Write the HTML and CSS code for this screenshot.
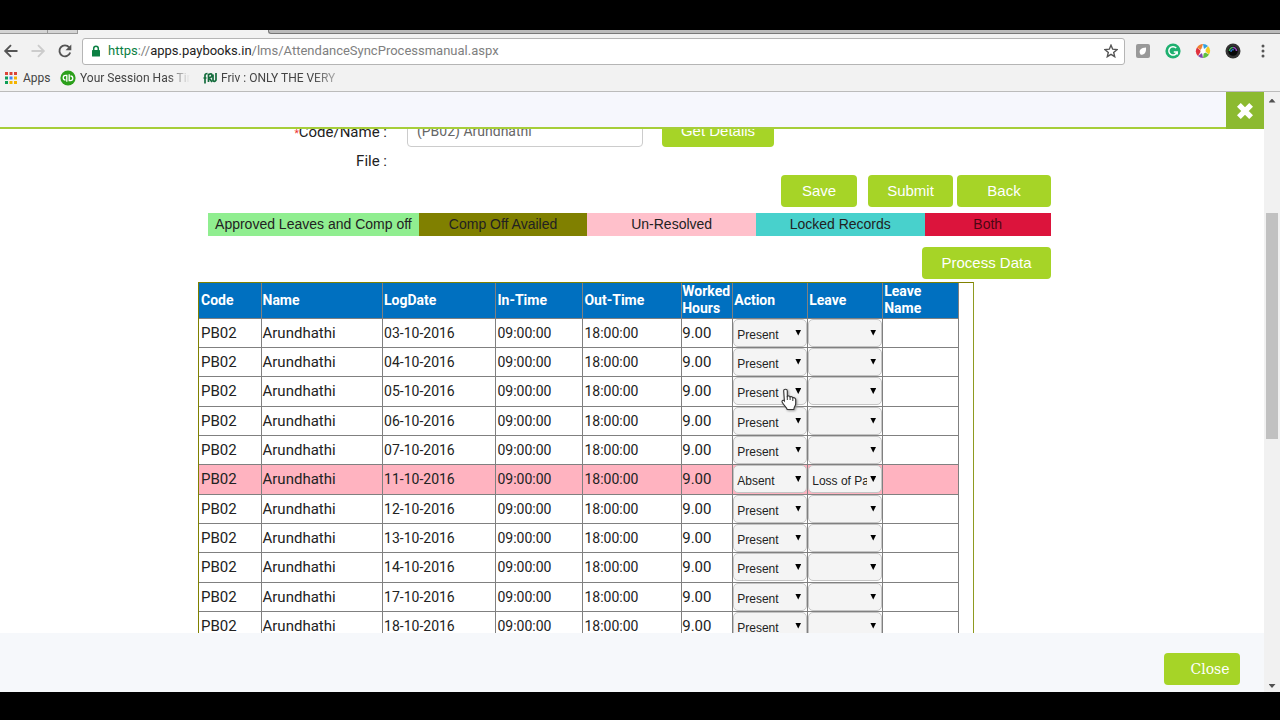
FILE: index.html
```html
<!DOCTYPE html>
<html lang="en">
<head>
<meta charset="utf-8">
<title>Attendance Sync Process</title>
<link rel="stylesheet" href="styles.css">
</head>
<body>
<div class="browser">
  <div class="tabs"><span class="tab tab-first"></span><span class="tab tab-second"></span><span class="tab tab-active"></span><span class="tab tab-rest"></span></div>
  <div class="toolbar">
    <button class="nav" aria-label="Back to previous page"><svg width="16" height="16" viewBox="0 0 16 16"><path d="M14.500 8H2.500M8 2.200 2.200 8 8 13.800" fill="none" stroke="#555" stroke-width="1.900"/></svg></button>
    <button class="nav" aria-label="Forward"><svg width="16" height="16" viewBox="0 0 16 16"><path d="M1.500 8h12M8 2.200 13.800 8 8 13.800" fill="none" stroke="#ccc" stroke-width="1.900"/></svg></button>
    <button class="nav" aria-label="Reload"><svg width="16" height="16" viewBox="0 0 16 16"><path d="M12.200 4.400A5.500 5.500 0 1 0 13.200 9.500" fill="none" stroke="#555" stroke-width="1.900"/><path d="M14.300 1.500v5.800H8.500z" fill="#555"/></svg></button>
    <div class="omnibox">
      <svg width="10" height="12" viewBox="0 0 10 12"><path d="M2.700 6V3.500a2.300 2.300 0 0 1 4.600 0V6" fill="none" stroke="#0b8043" stroke-width="1.500"/><rect x="1" y="5" width="8" height="6.500" rx=".6" fill="#0b8043"/></svg>
      <div class="url" role="textbox" aria-label="Address"><span class="url-scheme">https</span><span class="url-dim">://</span>apps.paybooks.in<span class="url-dim">/lms/AttendanceSyncProcessmanual.aspx</span></div>
      <svg width="14" height="14" viewBox="0 0 14 14"><path d="m7 1.200 1.700 4 4.300.4-3.300 2.800 1 4.300L7 10.400l-3.700 2.300 1-4.300L1 5.600l4.300-.4z" fill="none" stroke="#555" stroke-width="1.400"/></svg>
    </div>
    <div class="extensions">
      <svg width="16" height="16" viewBox="0 0 16 16"><rect x="1" y="1" width="14" height="14" rx="2" fill="#999"/><path d="M5.500 11.500c-2.500-4 .5-7 5.500-7 .5 4.500-1.500 8-5.500 7z" fill="#fff"/></svg>
      <svg width="16" height="16" viewBox="0 0 16 16"><circle cx="8" cy="8" r="7.600" fill="#1fb070"/><path d="M11.200 5.100A4.200 4.200 0 1 0 12.100 9H8.800M12.200 8.800v2.800" fill="none" stroke="#fff" stroke-width="1.500"/></svg>
      <svg width="16" height="16" viewBox="0 0 16 16"><path d="M8 1a7 7 0 0 0-6 3.500L6 7z" fill="#f08030"/><path d="M2 4.500A7 7 0 0 0 3 13l3-5z" fill="#e0303c"/><path d="M3 13a7 7 0 0 0 5 2l-1-5z" fill="#8048b0"/><path d="M8 15a7 7 0 0 0 6-3.500L9 9z" fill="#60c040"/><path d="M14 11.500A7 7 0 0 0 13 3l-3 5z" fill="#f0d020"/><path d="M13 3a7 7 0 0 0-5-2l1 5z" fill="#30a0e0"/><circle cx="8" cy="8" r="2.500" fill="#fff"/></svg>
      <svg width="16" height="16" viewBox="0 0 16 16"><circle cx="8" cy="8" r="7.500" fill="#333"/><circle cx="8" cy="8" r="4.800" fill="#080808"/><path d="M4.500 8A3.500 3.500 0 0 1 8 4.500" fill="none" stroke="#3cb464" stroke-width="1.600"/><path d="M8 4.500A3.500 3.500 0 0 1 11.500 8" fill="none" stroke="#9c4ac0" stroke-width="1.600"/><path d="M6 9a2 2 0 0 1 3-2" fill="none" stroke="#3078d0" stroke-width="1.300"/></svg>
      <svg width="4" height="16" viewBox="0 0 4 16"><g fill="#555"><circle cx="2" cy="3" r="1.500"/><circle cx="2" cy="8" r="1.500"/><circle cx="2" cy="13" r="1.500"/></g></svg>
    </div>
  </div>
  <nav class="bookmarks">
    <a href="#" class="bookmark apps"><svg width="14" height="14" viewBox="0 0 14 14"><path d="M1 1h3v3H1zM5.500 1h3v3h-3zM10 1h3v3h-3z" fill="#db4437"/><path d="M1 5.500h3v3H1z" fill="#0f9d58"/><path d="M5.500 5.500h3v3h-3z" fill="#4285f4"/><path d="M10 5.500h3v3h-3zM5.500 10h3v3h-3zM10 10h3v3h-3z" fill="#f4b400"/><path d="M1 10h3v3H1z" fill="#0f9d58"/></svg>Apps</a>
    <a href="#" class="bookmark session"><svg width="16" height="16" viewBox="0 0 16 16"><circle cx="8" cy="8" r="7.600" fill="#2ca01c"/><path d="M6.800 11.800V5.400H5.500a2.300 2.300 0 0 0 0 4.600M9.200 4.200v6.400h1.300a2.300 2.300 0 0 0 0-4.600" fill="none" stroke="#fff" stroke-width="1.300"/></svg><span>Your Session Has Time</span></a>
    <a href="#" class="bookmark friv"><svg width="14" height="14" viewBox="0 0 14 14"><path d="M2 12.500V4.500q0-2 2.500-2M.5 7h3M5.500 11V3.500q3.500-1.500 3.500.8Q9 6.500 6 6.800L9 11M10 3.500v6q1.500 2 3-.5V2" fill="none" stroke="#146c3c" stroke-width="1.700"/></svg><span>Friv : ONLY THE VERY</span></a>
  </nav>
</div>
<div class="viewport">
  <div class="dialog">
    <header class="dialog-head"><button class="dismiss" aria-label="Close dialog"><svg width="20" height="20" viewBox="0 0 18 18"><path d="m3.500 3.500 11 11m0-11-11 11" stroke="#fff" stroke-width="4.800"/></svg></button></header>
    <main class="dialog-body">
      <div class="form-row">
        <label class="label" for="employee"><span class="required">*</span>Code/Name :</label>
        <input class="employee" id="employee" type="text" value="(PB02) Arundhathi">
        <button class="btn btn-details">Get Details</button>
      </div>
      <div class="file-row"><span class="label">File :</span></div>
      <div class="actions"><button class="btn btn-save">Save</button><button class="btn btn-submit">Submit</button><button class="btn btn-back">Back</button></div>
      <div class="legend"><span class="key approved">Approved Leaves and Comp off</span><span class="key comp">Comp Off Availed</span><span class="key unresolved">Un-Resolved</span><span class="key locked">Locked Records</span><span class="key both">Both</span></div>
      <div class="process"><button class="btn btn-process">Process Data</button></div>
      <div class="records">
        <table>
          <colgroup><col class="c-code"><col class="c-name"><col class="c-date"><col class="c-in"><col class="c-out"><col class="c-hours"><col class="c-pick"><col class="c-pick"><col class="c-leave"></colgroup>
          <thead><tr><th>Code</th><th>Name</th><th>LogDate</th><th>In-Time</th><th>Out-Time</th><th class="hours">Worked Hours</th><th>Action</th><th>Leave</th><th>Leave Name</th></tr></thead>
          <tbody>
            <tr><td>PB02</td><td>Arundhathi</td><td class="stamp">03-10-2016</td><td class="stamp">09:00:00</td><td class="stamp">18:00:00</td><td class="hours">9.00</td><td class="choice"><span class="pick"><select aria-label="Action"><option>Present</option><option>Absent</option></select></span></td><td class="choice"><span class="pick"><select aria-label="Leave"><option></option></select></span></td><td></td></tr>
            <tr><td>PB02</td><td>Arundhathi</td><td class="stamp">04-10-2016</td><td class="stamp">09:00:00</td><td class="stamp">18:00:00</td><td class="hours">9.00</td><td class="choice"><span class="pick"><select aria-label="Action"><option>Present</option><option>Absent</option></select></span></td><td class="choice"><span class="pick"><select aria-label="Leave"><option></option></select></span></td><td></td></tr>
            <tr><td>PB02</td><td>Arundhathi</td><td class="stamp">05-10-2016</td><td class="stamp">09:00:00</td><td class="stamp">18:00:00</td><td class="hours">9.00</td><td class="choice"><span class="pick"><select aria-label="Action"><option>Present</option><option>Absent</option></select><svg class="hand" width="19" height="26" viewBox="0 0 19 26"><path d="M5.500 2.200c1.200 0 1.800.8 1.800 1.800v5.300c1-.8 2.500-.4 2.800.6 1-.6 2.400-.1 2.700.9 1.300-.5 2.900.2 2.900 1.800v4.200c0 2-1.700 3.100-1.900 5.700H7.200c-.4-2.300-3.700-4.400-5-7.200-.9-1.800 1-2.700 2.200-1.300l-.7-10c-.1-1.100.7-1.800 1.800-1.800z" fill="#fff" stroke="#333" stroke-width="1.100"/><path d="M7.300 9v4M10.100 10v3M12.800 11v3" stroke="#333"/></svg></span></td><td class="choice"><span class="pick"><select aria-label="Leave"><option></option></select></span></td><td></td></tr>
            <tr><td>PB02</td><td>Arundhathi</td><td class="stamp">06-10-2016</td><td class="stamp">09:00:00</td><td class="stamp">18:00:00</td><td class="hours">9.00</td><td class="choice"><span class="pick"><select aria-label="Action"><option>Present</option><option>Absent</option></select></span></td><td class="choice"><span class="pick"><select aria-label="Leave"><option></option></select></span></td><td></td></tr>
            <tr><td>PB02</td><td>Arundhathi</td><td class="stamp">07-10-2016</td><td class="stamp">09:00:00</td><td class="stamp">18:00:00</td><td class="hours">9.00</td><td class="choice"><span class="pick"><select aria-label="Action"><option>Present</option><option>Absent</option></select></span></td><td class="choice"><span class="pick"><select aria-label="Leave"><option></option></select></span></td><td></td></tr>
            <tr class="flagged"><td>PB02</td><td>Arundhathi</td><td class="stamp">11-10-2016</td><td class="stamp">09:00:00</td><td class="stamp">18:00:00</td><td class="hours">9.00</td><td class="choice"><span class="pick"><select aria-label="Action"><option>Absent</option><option>Present</option></select></span></td><td class="choice"><span class="pick"><select aria-label="Leave"><option>Loss of Pay</option></select></span></td><td></td></tr>
            <tr><td>PB02</td><td>Arundhathi</td><td class="stamp">12-10-2016</td><td class="stamp">09:00:00</td><td class="stamp">18:00:00</td><td class="hours">9.00</td><td class="choice"><span class="pick"><select aria-label="Action"><option>Present</option><option>Absent</option></select></span></td><td class="choice"><span class="pick"><select aria-label="Leave"><option></option></select></span></td><td></td></tr>
            <tr><td>PB02</td><td>Arundhathi</td><td class="stamp">13-10-2016</td><td class="stamp">09:00:00</td><td class="stamp">18:00:00</td><td class="hours">9.00</td><td class="choice"><span class="pick"><select aria-label="Action"><option>Present</option><option>Absent</option></select></span></td><td class="choice"><span class="pick"><select aria-label="Leave"><option></option></select></span></td><td></td></tr>
            <tr><td>PB02</td><td>Arundhathi</td><td class="stamp">14-10-2016</td><td class="stamp">09:00:00</td><td class="stamp">18:00:00</td><td class="hours">9.00</td><td class="choice"><span class="pick"><select aria-label="Action"><option>Present</option><option>Absent</option></select></span></td><td class="choice"><span class="pick"><select aria-label="Leave"><option></option></select></span></td><td></td></tr>
            <tr><td>PB02</td><td>Arundhathi</td><td class="stamp">17-10-2016</td><td class="stamp">09:00:00</td><td class="stamp">18:00:00</td><td class="hours">9.00</td><td class="choice"><span class="pick"><select aria-label="Action"><option>Present</option><option>Absent</option></select></span></td><td class="choice"><span class="pick"><select aria-label="Leave"><option></option></select></span></td><td></td></tr>
            <tr><td>PB02</td><td>Arundhathi</td><td class="stamp">18-10-2016</td><td class="stamp">09:00:00</td><td class="stamp">18:00:00</td><td class="hours">9.00</td><td class="choice"><span class="pick"><select aria-label="Action"><option>Present</option><option>Absent</option></select></span></td><td class="choice"><span class="pick"><select aria-label="Leave"><option></option></select></span></td><td></td></tr>
          </tbody>
        </table>
      </div>
    </main>
    <footer class="dialog-foot"><button class="btn btn-close">Close</button></footer>
  </div>
  <div class="scrollbar"><span class="arrow arrow-up"></span><span class="gap-above"></span><span class="thumb"></span><span class="gap-below"></span><span class="arrow arrow-down"></span></div>
</div>
</body>
</html>
```
FILE: styles.css
```css
* { box-sizing: border-box; }

body {
  margin: 0;
  height: 100vh;
  padding: 30px 0 28px;
  display: flex;
  flex-direction: column;
  overflow: hidden;
  background: #000;
  color: #222;
  font-family: Roboto, "Liberation Sans", sans-serif;
  font-size: 15px;
}

button { border: 0; padding: 0; font: inherit; background: none; }
svg { display: block; flex: none; }

/* Browser frame */
.browser { background: #f2f2f2; border-bottom: 1px solid #bbb; }
.tabs { display: flex; height: 4px; }
.tab { background: #d4d4d4; border-bottom: 1px solid #999; }
.tab-first { width: 48px; border-right: 1px solid #999; }
.tab-second { width: 30px; border-right: 1px solid #999; }
.tab-active { width: 190px; background: #f2f2f2; border-bottom: 0; }
.tab-rest { flex: 1; background: #bbb; border-bottom-color: #777; border-left: 1px solid #777; border-bottom-left-radius: 3px; }
.toolbar { display: flex; align-items: center; height: 34px; padding: 0 15px 0 3px; }
.nav { width: 16px; margin-right: 11px; }
.nav:nth-child(3) { margin-right: 9px; }
.omnibox { flex: 1; display: flex; align-items: center; height: 27px; padding: 0 6px 0 8px; border: 1px solid #b5b5b5; border-radius: 3px; background: #fff; }
.url { flex: 1; padding-left: 7px; font-size: 13px; line-height: 18px; color: #222; }
.url-scheme { color: #0b8043; }
.url-dim { color: #808080; }
.extensions { display: flex; align-items: center; gap: 14px; padding-left: 10px; }
.extensions svg:last-child { margin-left: 6px; }
.bookmarks { display: flex; align-items: center; height: 23px; padding: 0 4px 4px; }
.bookmark { display: flex; align-items: center; color: #444; text-decoration: none; font-size: 12px; line-height: 18px; white-space: nowrap; }
.apps { gap: 5px; width: 45px; }
.session { gap: 4px; margin-left: 11px; }
.session span { width: 110px; overflow: hidden; mask-image: linear-gradient(to right, #000 80%, transparent); }
.friv { gap: 4px; margin-left: 13px; }
.friv span { mask-image: linear-gradient(to right, #000 80%, #0006); }

/* Page */
.viewport { flex: 1; display: flex; min-height: 0; }
.dialog { flex: 1; display: flex; flex-direction: column; min-width: 0; background: #fff; }
.dialog-head { flex: none; display: flex; justify-content: flex-end; height: 37px; background: linear-gradient(#f6f7fd 35px, #a6ce39 35px); }
.dismiss { display: grid; place-items: center; width: 38px; background: #8cba30; }
.dialog-body { flex: 1; min-height: 0; overflow: hidden; padding: 0 213px 0 198px; }
.dialog-foot { flex: none; height: 59px; padding: 20px 24px 0; background: #f6f8fb; text-align: right; }

.form-row { display: flex; align-items: flex-end; height: 34px; margin-top: -16px; }
.label { width: 189px; height: 34px; text-align: right; line-height: 34px; }
.form-row .label { line-height: 38px; }
.required { color: #e33; font-size: 10px; }
.employee { width: 236px; height: 34px; margin: 0 19px 0 20px; padding: 1px 9px 0; border: 1px solid #ccc; border-radius: 4px; color: #666; font: inherit; font-size: 14px; }
.file-row { display: flex; align-items: center; height: 28px; }

.btn { height: 32px; border-radius: 4px; background: #a6d427; color: #fff; font-family: "Liberation Sans", Arial, sans-serif; font-size: 15px; line-height: 32px; }
.btn-details { width: 112px; }
.btn-save { width: 76px; margin-right: 11px; }
.btn-submit { width: 85px; margin-right: 4px; }
.btn-back { width: 94px; }
.btn-process { width: 129px; }
.btn-close { width: 76px; padding-left: 16px; font-family: "Roboto Slab", "DejaVu Serif", serif; font-size: 14px; }
.actions { display: flex; justify-content: flex-end; margin-bottom: 6px; }
.process { display: flex; justify-content: flex-end; margin-bottom: 3px; }

.legend { display: flex; height: 23px; margin: 0 0 11px 10px; font-family: "Liberation Sans", Arial, sans-serif; font-size: 14px; line-height: 23px; text-align: center; }
.key { width: 20%; white-space: nowrap; }
.approved { width: 25%; background: #90ee90; }
.comp { background: #808000; }
.unresolved { background: #ffc0cb; }
.locked { background: #48d1cc; }
.both { width: 15%; background: #dc143c; color: #4c0712; }

.records { width: 91%; padding-right: 14px; border: 1px solid #808000; border-right-color: #8f9a20; }
table { width: 100%; table-layout: fixed; border-collapse: collapse; }
.c-code { width: 62px; }
.c-name { width: 16%; }
.c-in { width: 87px; }
.c-out { width: 13%; }
.c-hours { width: 51px; }
.c-pick { width: 75px; }
.c-leave { width: 76px; }
th { height: 35px; padding: 0 0 0 1px; border: 1px solid #808080; border-top: 0; background: #0070c0; color: #fff; font-size: 14px; font-weight: 700; line-height: 17px; text-align: left; }
td { height: 29px; padding: 0 0 0 1px; border: 1px solid #808080; line-height: 26px; white-space: nowrap; }
tr > :first-child { border-left: 0; padding-left: 2px; }
tr > .hours, tr > .choice { padding-left: 0; }
tr:nth-child(3n) td { height: 30px; }
.stamp { font-size: 14px; }
.flagged td { background: #ffb3c0; }
.pick { display: block; position: relative; }
.pick::after { content: ""; position: absolute; right: 6px; top: 11px; width: 6px; height: 6px; background: #000; clip-path: polygon(0 0, 100% 0, 50% 100%); pointer-events: none; }
select { display: block; width: 100%; height: 28px; padding: 4px 14px 0 3px; appearance: none; border: 1px solid #c4c4c4; border-radius: 5px; background: #f4f4f4; color: #222; font-family: "Liberation Sans", Arial, sans-serif; font-size: 12px; }
.hand { position: absolute; left: 47px; top: 10px; z-index: 1; filter: drop-shadow(1px 1px 1px #999); }

/* Scroll bar */
.scrollbar { flex: none; display: flex; flex-direction: column; align-items: center; width: 16px; background: #f1f1f1; }
.arrow { display: grid; place-items: center; height: 17px; }
.arrow::after { content: ""; width: 7px; height: 4px; background: #505050; }
.arrow-up::after { clip-path: polygon(50% 0, 100% 100%, 0 100%); }
.arrow-down { height: 12px; }
.arrow-down::after { clip-path: polygon(0 0, 100% 0, 50% 100%); }
.gap-above { flex: 104; }
.thumb { flex: 226; width: 12px; background: #c1c1c1; }
.gap-below { flex: 241; }
```
